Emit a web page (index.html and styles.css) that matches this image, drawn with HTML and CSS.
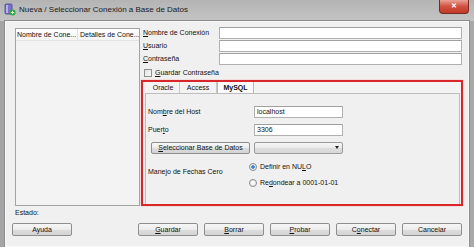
FILE: index.html
```html
<!DOCTYPE html>
<html lang="es">
<head>
    <meta charset="UTF-8">
    <title>Nueva / Seleccionar Conexión a Base de Datos</title>
    <link rel="stylesheet" href="styles.css">
</head>
<body>

    <div class="window">
        <!-- Title bar -->
        <div class="titlebar">
            <svg class="app-icon" width="12" height="13" viewBox="0 0 12 13">
                <rect x="1" y="1" width="7" height="10" rx="1" fill="#7b72c9" stroke="#4a4290" stroke-width="0.8"/>
                <rect x="2" y="2" width="2" height="8" fill="#b7b0ee"/>
                <circle cx="8.5" cy="9.5" r="3" fill="#2aa836"/>
                <path d="M8.5 7.8v3.4M6.8 9.5h3.4" stroke="#dff7d8" stroke-width="1"/>
            </svg>
            <span class="title">Nueva / Seleccionar Conexión a Base de Datos</span>
            <div class="close-btn">✕</div>
        </div>

        <div class="client">
            <div class="main">
                <!-- Saved connections -->
                <div class="conn-list">
                    <div class="list-header">
                        <span class="col-name">Nombre de Cone...</span>
                        <span class="col-detail">Detalles de Cone...</span>
                    </div>
                </div>

                <!-- Connection form -->
                <div class="conn-form">
                    <div class="field-grid">
                        <label><u>N</u>ombre de Conexión</label>
                        <div class="textbox"></div>
                        <label><u>U</u>suario</label>
                        <div class="textbox"></div>
                        <label><u>C</u>ontraseña</label>
                        <div class="textbox"></div>
                    </div>

                    <div class="check-row">
                        <span class="checkbox"></span>
                        <span><u>G</u>uardar Contraseña</span>
                    </div>

                    <div class="highlight">
                        <div class="tabs">
                            <div class="tab">Oracle</div>
                            <div class="tab">Access</div>
                            <div class="tab tab-active">MySQL</div>
                        </div>
                        <div class="tab-panel">
                            <div class="panel-grid">
                                <span>Nom<u>b</u>re del Host</span>
                                <div class="textbox small">localhost</div>
                                <span>Puer<u>t</u>o</span>
                                <div class="textbox small">3306</div>
                                <div class="btn btn-select"><u>S</u>eleccionar Base de Datos</div>
                                <div class="combo"><span class="combo-arrow"></span></div>
                                <span class="zero-label">Manejo de Fechas Cero</span>
                                <div class="radio-group">
                                    <div class="radio-row">
                                        <span class="radio checked"></span>
                                        <span>Definir en NU<u>L</u>O</span>
                                    </div>
                                    <div class="radio-row">
                                        <span class="radio"></span>
                                        <span>Re<u>d</u>ondear a 0001-01-01</span>
                                    </div>
                                </div>
                            </div>
                        </div>
                    </div>
                </div>
            </div>

            <div class="status">Estado:</div>

            <div class="buttons">
                <div class="btn">Ayuda</div>
                <div class="btn-group">
                    <div class="btn"><u>G</u>uardar</div>
                    <div class="btn"><u>B</u>orrar</div>
                    <div class="btn"><u>P</u>robar</div>
                    <div class="btn">C<u>o</u>nectar</div>
                    <div class="btn">Cancelar</div>
                </div>
            </div>
        </div>
    </div>

</body>
</html>
```

FILE: styles.css
```css
body {
    margin: 0;
    font-family: "Liberation Sans", Arial, sans-serif;
    font-size: 7px;
    color: #111;
    overflow: hidden;
}

u {
    text-decoration: underline;
    text-underline-offset: 1px;
}

/* Window frame */
.window {
    width: 474px;
    height: 247px;
    display: flex;
    flex-direction: column;
    background: linear-gradient(to right, #a4a4a4, #bdbdbd 30%, #b2b2b2 60%, #a9a9a9);
}

.titlebar {
    height: 21px;
    display: flex;
    align-items: flex-start;
    background: linear-gradient(to bottom, #b4b4b4, #c4c4c4);
}

.app-icon {
    margin: 3px 0 0 4px;
}

.title {
    margin: 5px 0 0 3px;
    font-size: 8px;
    color: #1a1a1a;
}

.close-btn {
    margin-left: auto;
    margin-right: 5px;
    width: 28px;
    height: 13px;
    border: 1px solid #7a2a22;
    border-top: none;
    border-radius: 0 0 4px 4px;
    background: linear-gradient(to bottom, #e8a296, #d2503f 50%, #c03a26);
    color: #fff;
    font-size: 7px;
    font-weight: bold;
    text-align: center;
    line-height: 12px;
}

.client {
    height: 218px;
    margin: 0 5px;
    border: 1px solid #f8f8f8;
    box-shadow: 0 0 0 1px #8c8c8c;
    background-color: #f0f0f0;
    padding: 5px 0 4px;
    box-sizing: content-box;
    display: flex;
    flex-direction: column;
}

.main {
    height: 180px;
    display: flex;
}

/* Connection list */
.conn-list {
    width: 123px;
    height: 176px;
    margin: 1px 0 0 9px;
    border: 1px solid #a3a3a3;
    background-color: #f3f3f3;
}

.list-header {
    height: 11px;
    display: flex;
    background: linear-gradient(to bottom, #ffffff, #f4f4f4);
    border-bottom: 1px solid #e2e2e2;
    line-height: 11px;
    white-space: nowrap;
    overflow: hidden;
}

.col-name {
    width: 60px;
    flex-shrink: 0;
    padding-left: 1px;
    border-right: 1px solid #e0e0e0;
}

.col-detail {
    padding-left: 2px;
}

/* Form */
.conn-form {
    flex: 1;
    margin: 0 6px 0 3px;
}

.field-grid {
    display: grid;
    grid-template-columns: 76px 1fr;
    grid-auto-rows: 12px;
    row-gap: 1px;
    align-items: center;
}

.textbox {
    height: 12px;
    box-sizing: border-box;
    border: 1px solid #b0b0b0;
    border-top-color: #a0a0a0;
    background-color: #fff;
    padding-left: 2px;
    line-height: 10px;
}

.check-row {
    margin-top: 4px;
    height: 8px;
    display: flex;
    align-items: center;
    gap: 3px;
    padding-left: 1px;
}

.checkbox {
    width: 8px;
    height: 8px;
    box-sizing: border-box;
    border: 1px solid #8f8f8f;
    background: linear-gradient(135deg, #e4e4e4, #fafafa);
}

/* Red highlight around tab control */
.highlight {
    margin: 3px -1px 0 -2px;
    border: 2px solid #d8262a;
    box-shadow: 0 0 1px #f08a8a;
    padding: 0 1px 0 2px;
}

.tabs {
    height: 11px;
    display: flex;
    padding-left: 2px;
    background-color: #f3f3f3;
}

.tab {
    width: 32px;
    text-align: center;
    line-height: 11px;
    border-right: 1px solid #c9c9c9;
}

.tab:nth-child(2) {
    width: 36px;
}

.tab-active {
    width: 35px;
    font-weight: bold;
    background-color: #fafafa;
    border-left: 1px solid #b8b8b8;
    border-right: 1px solid #b8b8b8;
}

.tab-panel {
    height: 111px;
    border: 1px solid #bdbdbd;
    border-bottom: none;
    background-color: #f0f0f0;
    padding: 12px 0 0 2px;
    box-sizing: border-box;
}

.panel-grid {
    display: grid;
    grid-template-columns: 106px 89px;
    grid-auto-rows: 12px;
    row-gap: 6px;
    align-items: center;
}

.btn {
    height: 12px;
    box-sizing: border-box;
    border: 1px solid #8e8e8e;
    border-radius: 2px;
    background: linear-gradient(to bottom, #f6f6f6, #ececec 50%, #dddddd 51%, #d3d3d3);
    text-align: center;
    line-height: 10px;
}

.btn-select {
    width: 99px;
    margin-left: 3px;
}

.combo {
    height: 12px;
    box-sizing: border-box;
    border: 1px solid #9a9a9a;
    border-radius: 2px;
    background: linear-gradient(to bottom, #f6f6f6, #ebebeb 50%, #dedede 51%, #d8d8d8);
    display: flex;
    justify-content: flex-end;
    align-items: center;
    padding-right: 3px;
}

.combo-arrow {
    width: 0;
    height: 0;
    border-left: 2.5px solid transparent;
    border-right: 2.5px solid transparent;
    border-top: 3px solid #222;
}

.zero-label {
    align-self: start;
    margin-top: 8px;
}

.radio-group {
    align-self: start;
    margin: 3px 0 0 -5px;
    display: flex;
    flex-direction: column;
    gap: 8px;
}

.radio-row {
    height: 8px;
    display: flex;
    align-items: center;
    gap: 3px;
    white-space: nowrap;
}

.radio {
    width: 8px;
    height: 8px;
    box-sizing: border-box;
    border: 1px solid #8b8b8b;
    border-radius: 50%;
    background: radial-gradient(circle, #fff, #e3e3e3);
}

.radio.checked {
    background: radial-gradient(circle, #2f67c8 0, #5d9be6 1.6px, #f4f4f4 2.2px, #e6e6e6);
}

/* Footer */
.status {
    margin: 1px 0 0 9px;
    height: 10px;
    line-height: 10px;
}

.buttons {
    margin-top: 5px;
    display: flex;
    padding: 0 6px 0 6px;
}

.buttons .btn {
    width: 60px;
    height: 13px;
    line-height: 11px;
}

.btn-group {
    margin-left: auto;
    display: flex;
    gap: 6px;
}
```
